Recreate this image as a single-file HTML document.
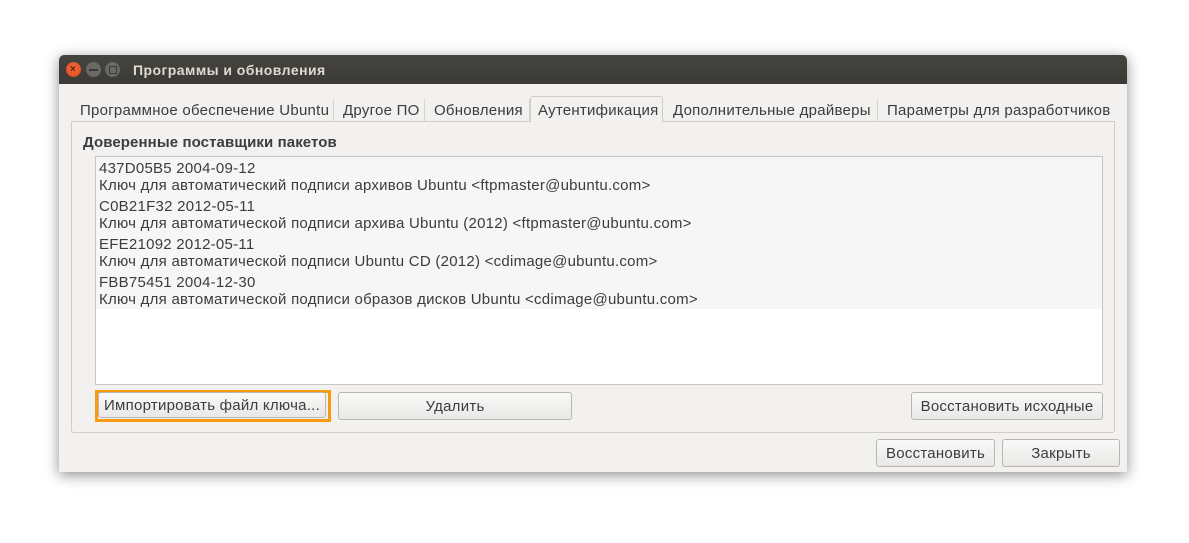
<!DOCTYPE html>
<html><head><meta charset="utf-8"><style>
body{margin:0;width:1189px;height:543px;background:#fff;position:relative;overflow:hidden;font-family:"Liberation Sans","DejaVu Sans",sans-serif;font-size:15px;letter-spacing:0.25px;color:#3c3c3c}
.a{position:absolute;white-space:nowrap}
#win{left:59px;top:55px;width:1068px;height:417px;background:#f2f1f0;box-shadow:0 3px 14px rgba(0,0,0,.45);border-radius:5px 5px 0 0}
#title{left:59px;top:55px;width:1068px;height:29px;background:linear-gradient(#45443f,#3b3a36);border-radius:5px 5px 0 0}
.c{position:absolute;width:15px;height:15px;border-radius:50%;top:62px}
.tab{position:absolute;top:99px;height:22px;line-height:24px;padding-left:8px;box-sizing:border-box;border-right:1px solid #d6d4d0;color:#3c3c3c;white-space:nowrap;overflow:hidden}
.btn{position:absolute;height:26px;line-height:28px;text-align:center;border:1px solid #b8b6b2;border-radius:3px;background:linear-gradient(#f9f9f8,#e9e8e6);color:#3c3c3c;white-space:nowrap}
.row{position:absolute;left:96px;width:1006px;height:38px;background:#f6f6f6}
.row div{position:absolute;left:3px;white-space:nowrap}
</style></head><body>
<div class="a" id="win"></div>
<div class="a" id="title"></div>
<div class="c" style="left:66px;background:radial-gradient(circle at 50% 40%,#f26d3d,#d9441a)"></div>
<div class="a" style="left:70px;top:62px;font-size:10px;color:#5a1a05;font-weight:bold;line-height:15px;letter-spacing:0">×</div>
<div class="c" style="left:86px;background:#6a6964"></div>
<div class="a" style="left:89px;top:69px;width:9px;height:1.5px;background:#3a3935"></div>
<div class="c" style="left:105px;background:#6a6964"></div>
<div class="a" style="left:109px;top:66px;width:6px;height:6px;border:1px solid #3a3935"></div>
<div class="a" style="left:133px;top:62px;color:#dfdbd2;font-weight:bold;font-size:14px;letter-spacing:0.45px">Программы и обновления</div>

<div class="a" style="left:71px;top:121px;width:1042px;height:310px;border:1px solid #cfcdc9;border-radius:0 0 3px 3px;background:#f2f1f0"></div>
<div class="tab" style="left:72px;width:262px">Программное обеспечение Ubuntu</div>
<div class="tab" style="left:335px;width:90px">Другое ПО</div>
<div class="tab" style="left:426px;width:104px">Обновления</div>
<div class="a" style="left:530px;top:96px;width:133px;height:26px;border:1px solid #cfcdc9;border-bottom:none;border-radius:3px 3px 0 0;background:#f2f1f0;line-height:28px;padding-left:7px;box-sizing:border-box;overflow:hidden">Аутентификация</div>
<div class="tab" style="left:665px;width:213px">Дополнительные драйверы</div>
<div class="tab" style="left:879px;width:234px;border-right:none">Параметры для разработчиков</div>

<div class="a" style="left:83px;top:134px;font-weight:bold;letter-spacing:0.1px">Доверенные поставщики пакетов</div>
<div class="a" style="left:95px;top:156px;width:1006px;height:227px;border:1px solid #c8c6c2;background:#fff"></div>
<div class="row" style="top:157px"><div style="top:3px">437D05B5 2004-09-12</div><div style="top:20px">Ключ для автоматический подписи архивов Ubuntu &lt;ftpmaster@ubuntu.com&gt;</div></div>
<div class="row" style="top:195px"><div style="top:3px">C0B21F32 2012-05-11</div><div style="top:20px">Ключ для автоматической подписи архива Ubuntu (2012) &lt;ftpmaster@ubuntu.com&gt;</div></div>
<div class="row" style="top:233px"><div style="top:3px">EFE21092 2012-05-11</div><div style="top:20px">Ключ для автоматической подписи Ubuntu CD (2012) &lt;cdimage@ubuntu.com&gt;</div></div>
<div class="row" style="top:271px"><div style="top:3px">FBB75451 2004-12-30</div><div style="top:20px">Ключ для автоматической подписи образов дисков Ubuntu &lt;cdimage@ubuntu.com&gt;</div></div>

<div class="a" style="left:95px;top:390px;width:230px;height:26px;border:3px solid #f99b11"></div>
<div class="btn" style="left:98px;top:392px;width:226px;height:24px;line-height:26px">Импортировать файл ключа...</div>
<div class="btn" style="left:338px;top:392px;width:232px">Удалить</div>
<div class="btn" style="left:911px;top:392px;width:190px">Восстановить исходные</div>
<div class="btn" style="left:876px;top:439px;width:117px">Восстановить</div>
<div class="btn" style="left:1002px;top:439px;width:116px">Закрыть</div>
</body></html>
